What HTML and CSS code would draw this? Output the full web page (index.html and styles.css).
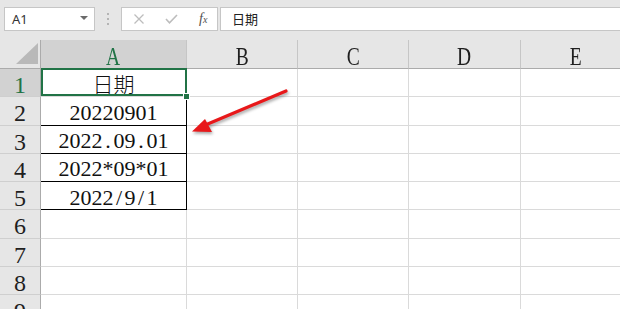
FILE: index.html
```
<!DOCTYPE html>
<html>
<head>
<meta charset="utf-8">
<link rel="stylesheet" href="styles.css">
</head>
<body>
<div class="toolbar">
  <div class="namebox"><span class="ref">A1</span><span class="caret"></span></div>
  <div class="grip"><i></i><i></i><i></i></div>
  <div class="fxbox">
    <svg class="ic" width="12" height="10" viewBox="0 0 12 10"><path d="M1.5 0.5 L10.5 9.5 M10.5 0.5 L1.5 9.5" stroke="#bdbdbd" stroke-width="1.3" fill="none"/></svg>
    <svg class="ic" width="13" height="10" viewBox="0 0 13 10"><path d="M1 5 L4.5 8.8 L12 1" stroke="#bdbdbd" stroke-width="1.6" fill="none"/></svg>
    <span class="fx"><span class="f">f</span><span class="x">x</span></span>
  </div>
  <div class="formula">日期</div>
</div>
<div class="sheet">
  <div class="corner"><svg width="22" height="21" viewBox="0 0 22 21"><path d="M22 0 L22 21 L0 21 Z" fill="#b9b9b9"/></svg></div>
  <div class="ch active"><span class="lt">A</span></div>
  <div class="ch"><span class="lt">B</span></div>
  <div class="ch"><span class="lt">C</span></div>
  <div class="ch"><span class="lt">D</span></div>
  <div class="ch"><span class="lt">E</span></div>

  <div class="rh active">1</div>
  <div class="cell sel cjk">日期</div>
  <div class="cell"></div><div class="cell"></div><div class="cell"></div><div class="cell"></div>

  <div class="rh">2</div>
  <div class="cell tb">20220901</div>
  <div class="cell"></div><div class="cell"></div><div class="cell"></div><div class="cell"></div>

  <div class="rh">3</div>
  <div class="cell tb">2022<span class="p">.</span>09<span class="p">.</span>01</div>
  <div class="cell"></div><div class="cell"></div><div class="cell"></div><div class="cell"></div>

  <div class="rh">4</div>
  <div class="cell tb">2022<span class="p">*</span>09<span class="p">*</span>01</div>
  <div class="cell"></div><div class="cell"></div><div class="cell"></div><div class="cell"></div>

  <div class="rh">5</div>
  <div class="cell tb">2022<span class="p">/</span>9<span class="p">/</span>1</div>
  <div class="cell"></div><div class="cell"></div><div class="cell"></div><div class="cell"></div>

  <div class="rh">6</div>
  <div class="cell"></div><div class="cell"></div><div class="cell"></div><div class="cell"></div><div class="cell"></div>
  <div class="rh">7</div>
  <div class="cell"></div><div class="cell"></div><div class="cell"></div><div class="cell"></div><div class="cell"></div>
  <div class="rh">8</div>
  <div class="cell"></div><div class="cell"></div><div class="cell"></div><div class="cell"></div><div class="cell"></div>
  <div class="rh">9</div>
  <div class="cell"></div><div class="cell"></div><div class="cell"></div><div class="cell"></div><div class="cell"></div>
</div>
<svg class="arrow" width="620" height="309" viewBox="0 0 620 309">
  <line x1="286" y1="91" x2="203" y2="126" stroke="#e8181a" stroke-width="3.2" stroke-linecap="round"/>
  <path d="M192 131.5 L205 119 L212 132 Z" fill="#e8181a"/>
</svg>
</body>
</html>
```
FILE: styles.css
```
html, body {
  margin: 0;
  padding: 0;
}
body {
  width: 620px;
  height: 309px;
  overflow: hidden;
  background: #ffffff;
  position: relative;
  font-family: "Noto Sans", "Open Sans", sans-serif;
}
.toolbar {
  height: 40px;
  box-sizing: border-box;
  background: #e6e6e6;
  display: flex;
  align-items: flex-start;
  padding: 7px 0 0 4px;
}
.namebox {
  width: 91px;
  height: 24px;
  box-sizing: border-box;
  border: 1px solid #c6c6c6;
  background: #fff;
  display: flex;
  align-items: center;
  justify-content: space-between;
  padding: 0 6px 0 7px;
}
.ref {
  font-size: 13px;
  color: #333;
  line-height: 1;
}
.caret {
  width: 0;
  height: 0;
  border-left: 4px solid transparent;
  border-right: 4px solid transparent;
  border-top: 4px solid #6b6b6b;
  margin-top: -2px;
}
.grip {
  width: 27px;
  height: 24px;
  display: flex;
  flex-direction: column;
  align-items: center;
  justify-content: center;
  gap: 3px;
  margin-left: -1px;
}
.grip i {
  width: 2px;
  height: 2px;
  background: #b4b4b4;
  display: block;
}
.fxbox {
  width: 97px;
  height: 24px;
  box-sizing: border-box;
  border: 1px solid #c6c6c6;
  background: #fff;
  display: flex;
  align-items: center;
  padding-left: 11px;
  gap: 20px;
}
.ic {
  display: block;
}
.fx {
  font-family: "Liberation Serif", serif;
  font-style: italic;
  color: #505050;
  font-size: 14px;
  line-height: 1;
  margin-left: 1px;
}
.fx .x {
  font-size: 10px;
}
.formula {
  flex: 1;
  height: 24px;
  box-sizing: border-box;
  margin-left: 2px;
  border: 1px solid #c6c6c6;
  border-right: none;
  background: #fff;
  font-family: "Noto Sans CJK SC", sans-serif;
  font-size: 13px;
  color: #222;
  line-height: 21px;
  padding-left: 11px;
}
.sheet {
  display: grid;
  grid-template-columns: 41px 146px 111px 111px 112px 111px;
  grid-template-rows: 29px repeat(9, 28.25px);
  width: 632px;
}
.corner {
  background: #e6e6e6;
  border-right: 1px solid #ababab;
  border-bottom: 1px solid #ababab;
  box-sizing: border-box;
  display: flex;
  align-items: flex-end;
  justify-content: flex-end;
  padding: 0 2px 4px 0;
}
.corner svg {
  display: block;
}
.ch {
  background: #e6e6e6;
  box-sizing: border-box;
  border-right: 1px solid #c6c6c6;
  border-bottom: 1px solid #ababab;
  display: flex;
  align-items: center;
  justify-content: center;
  padding-top: 4px;
  font-family: "Liberation Serif", serif;
  font-size: 25px;
  color: #1f1f1f;
}
.ch .lt {
  display: inline-block;
  transform: scaleX(0.78);
  line-height: 1;
}
.ch.active {
  background: #d2d2d2;
  color: #217346;
}
.rh {
  background: #e6e6e6;
  box-sizing: border-box;
  border-right: 1px solid #ababab;
  border-bottom: 1px solid #cfcfcf;
  display: flex;
  align-items: center;
  justify-content: center;
  padding-top: 5px;
  font-family: "Liberation Serif", serif;
  font-size: 24px;
  line-height: 1;
  color: #1f1f1f;
}
.rh.active {
  background: #d2d2d2;
  color: #217346;
}
.cell {
  box-sizing: border-box;
  border-right: 1px solid #dadada;
  border-bottom: 1px solid #dadada;
  display: flex;
  align-items: center;
  justify-content: center;
  padding-top: 4px;
  font-family: "Liberation Serif", serif;
  font-size: 22px;
  line-height: 1;
  color: #111;
  white-space: nowrap;
}
.cell.cjk {
  font-family: "Noto Sans CJK SC", sans-serif;
  font-weight: 300;
  font-size: 21px;
  padding-top: 1px;
}
.cell.tb {
  border-right-color: #000;
  border-bottom-color: #000;
}
.p {
  display: inline-block;
  width: 11px;
  text-align: center;
}
.sel {
  position: relative;
}
.sel::after {
  content: "";
  position: absolute;
  left: 0;
  top: -1px;
  right: -1px;
  bottom: 0;
  border: 2px solid #217346;
}
.sel::before {
  content: "";
  position: absolute;
  right: -3px;
  bottom: -3px;
  width: 5px;
  height: 5px;
  background: #217346;
  outline: 1px solid #fff;
  z-index: 2;
}
.arrow {
  position: absolute;
  left: 0;
  top: 0;
  pointer-events: none;
  filter: drop-shadow(1px 2px 1.5px rgba(0, 0, 0, 0.35));
}
```
